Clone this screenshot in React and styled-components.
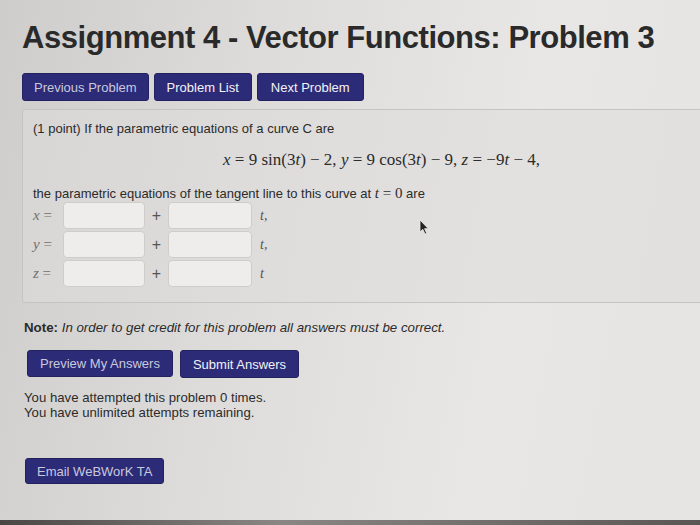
import styled, { createGlobalStyle } from "styled-components"

const GlobalStyle = createGlobalStyle`
    html, body {
        margin: 0;
        padding: 0;
    }
    body {
        width: 700px;
        height: 525px;
        overflow: hidden;
        font-family: "Liberation Sans", Arial, sans-serif;
        color: #2b2b2b;
        background: linear-gradient(100deg, #cfcdcb 0%, #dedcda 35%, #e9e7e5 70%, #e6e4e2 100%);
    }
`

const Page = styled.div`
    position: relative;
    height: 525px;
    padding: 20px 0 0 22px;
    box-sizing: border-box;
    display: flex;
    flex-direction: column;
`

const Title = styled.h1`
    margin: 0;
    font-size: 31px;
    line-height: 36px;
    font-weight: bold;
    color: #2a2a2a;
    letter-spacing: -0.45px;
`

const NavBar = styled.div`
    display: flex;
    gap: 5px;
    margin-top: 17px;
`

const Button = styled.button`
    background: #2c2b78;
    color: ${(p) => (p.dim ? "#c9c9dc" : "#f2f2f6")};
    border: 1px solid #23225f;
    border-radius: 3px;
    font-family: "Liberation Sans", Arial, sans-serif;
    font-size: 13px;
    height: ${(p) => p.h || 28}px;
    padding: 0 ${(p) => p.px || 11}px;
    cursor: pointer;
`

const Panel = styled.div`
    margin-top: 8px;
    margin-right: -10px;
    padding: 10px 10px 15px 10px;
    background: rgba(222, 220, 218, 0.55);
    border: 1px solid #c6c4c2;
    border-radius: 3px;
    font-size: 13px;
`

const Line = styled.p`
    margin: 0;
    line-height: 17px;
`

const Equation = styled.div`
    font-family: "Liberation Serif", "Times New Roman", serif;
    font-size: 17px;
    margin: 13px 0 15px 190px;
    i {
        font-style: italic;
    }
`

const MathInline = styled.span`
    font-family: "Liberation Serif", "Times New Roman", serif;
    font-size: 15px;
`

const Rows = styled.div`
    display: flex;
    flex-direction: column;
    gap: 2px;
    margin-top: 0;
`

const Row = styled.div`
    display: flex;
    align-items: center;
    height: 27px;
`

const Var = styled.span`
    width: 30px;
    font-family: "Liberation Serif", "Times New Roman", serif;
    font-size: 15px;
    color: #707070;
    i {
        font-style: italic;
    }
`

const Field = styled.input`
    width: ${(p) => p.w || 82}px;
    height: 27px;
    box-sizing: border-box;
    border: 1px solid #cfcdcb;
    border-radius: 4px;
    background: #eeedeb;
    padding: 0 4px;
`

const Plus = styled.span`
    width: 23px;
    text-align: center;
    font-size: 16px;
    color: #555;
`

const Tail = styled.span`
    margin-left: 8px;
    font-family: "Liberation Serif", "Times New Roman", serif;
    font-style: italic;
    font-size: 14px;
    color: #555;
`

const Note = styled.p`
    margin: 17px 0 0 2px;
    font-size: 13.3px;
    b {
        font-weight: bold;
    }
    i {
        font-style: italic;
    }
`

const Actions = styled.div`
    display: flex;
    gap: 7px;
    margin: 15px 0 0 5px;
`

const Attempts = styled.div`
    margin: 12px 0 0 2px;
    font-size: 13.2px;
    line-height: 15px;
`

const Email = styled.div`
    margin: 38px 0 0 3px;
`

const Cursor = styled.svg`
    position: absolute;
    left: 419px;
    top: 219px;
`

const BottomEdge = styled.div`
    position: absolute;
    left: 0;
    right: 0;
    bottom: 0;
    height: 5px;
    background: linear-gradient(90deg, #4a4644, #8a8684 40%, #5a5654);
`

const rows = [
    { v: "x", tail: "t," },
    { v: "y", tail: "t," },
    { v: "z", tail: "t" },
]

export default function App() {
    return (
        <>
            <GlobalStyle />
            <Page>
                <Title>Assignment 4 - Vector Functions: Problem 3</Title>
                <NavBar>
                    <Button dim px={11}>Previous Problem</Button>
                    <Button px={12}>Problem List</Button>
                    <Button px={13}>Next Problem</Button>
                </NavBar>
                <Panel>
                    <Line>(1 point) If the parametric equations of a curve C are</Line>
                    <Equation>
                        <i>x</i> = 9 sin(3<i>t</i>) − 2, <i>y</i> = 9 cos(3<i>t</i>) − 9, <i>z</i> = −9<i>t</i> − 4,
                    </Equation>
                    <Line>
                        the parametric equations of the tangent line to this curve at{" "}
                        <MathInline>
                            <i>t</i> = 0
                        </MathInline>{" "}
                        are
                    </Line>
                    <Rows>
                        {rows.map((r) => (
                            <Row key={r.v}>
                                <Var>
                                    <i>{r.v}</i> =
                                </Var>
                                <Field w={82} />
                                <Plus>+</Plus>
                                <Field w={84} />
                                <Tail>{r.tail}</Tail>
                            </Row>
                        ))}
                    </Rows>
                </Panel>
                <Note>
                    <b>Note:</b> <i>In order to get credit for this problem all answers must be correct.</i>
                </Note>
                <Actions>
                    <Button dim h={27} px={12}>Preview My Answers</Button>
                    <Button h={28} px={12}>Submit Answers</Button>
                </Actions>
                <Attempts>
                    You have attempted this problem 0 times.
                    <br />
                    You have unlimited attempts remaining.
                </Attempts>
                <Email>
                    <Button dim h={26} px={11}>Email WeBWorK TA</Button>
                </Email>
                <Cursor width="11" height="16" viewBox="0 0 11 16">
                    <path d="M1 1 L1 13 L3.8 10.3 L6 15 L7.7 14.2 L5.6 9.7 L9.3 9.7 Z" fill="#222" stroke="#eee" strokeWidth="0.8" />
                </Cursor>
                <BottomEdge />
            </Page>
        </>
    )
}
